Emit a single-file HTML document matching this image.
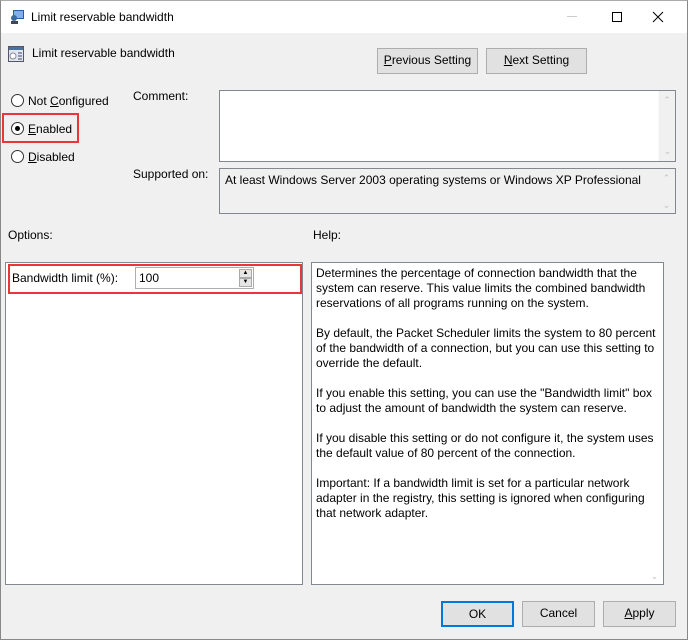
<!DOCTYPE html>
<html><head><style>
*{box-sizing:border-box;margin:0;padding:0}
body{width:688px;height:640px;background:#f0f0f0;font-family:"Liberation Sans",sans-serif;font-size:12px;color:#000;position:relative;overflow:hidden}
.a{position:absolute;white-space:nowrap}
.win{position:absolute;left:0;top:0;width:688px;height:640px;border:1px solid #888;border-top-color:#aaa}
.title{position:absolute;left:1px;top:1px;width:686px;height:32px;background:#fff}
.btn{position:absolute;background:#e1e1e1;border:1px solid #adadad;text-align:center;line-height:23px}
.box{position:absolute;background:#fff;border:1px solid #828790}
.sb{position:absolute;right:0;top:0;bottom:0;width:17px;background:#f0f0f0;color:#c0c0c0;font-size:9px;text-align:center}
.radio{position:absolute;width:13px;height:13px;border:1px solid #333;border-radius:50%;background:#fff}
u{text-decoration:underline}
.help div{margin-bottom:15px}
</style></head><body>
<div class="win"></div>
<div class="title"></div>
<svg class="a" style="left:9px;top:9px" width="16" height="16"><rect x="4" y="1" width="11" height="9" fill="#2a5caa"/><rect x="5" y="2" width="9" height="7" fill="#7fb0e8"/><circle cx="5" cy="9" r="3" fill="#3a6a9a"/><rect x="2" y="12" width="7" height="3" fill="#445"/></svg>
<div class="a" style="left:31px;top:10px">Limit reservable bandwidth</div>
<div class="a" style="left:567px;top:16px;width:10px;height:1px;background:#ccc"></div>
<div class="a" style="left:612px;top:12px;width:10px;height:10px;border:1px solid #000"></div>
<svg class="a" style="left:652px;top:11px" width="12" height="12"><path d="M1 1L11 11M11 1L1 11" stroke="#000" stroke-width="1"/></svg>
<svg class="a" style="left:8px;top:46px" width="16" height="16"><rect x="0.5" y="0.5" width="15" height="15" fill="#dfe6ef" stroke="#556"/><rect x="1" y="1" width="14" height="3" fill="#4a70a8"/><circle cx="5" cy="10" r="3" fill="#fff" stroke="#888"/><path d="M10 7h4M10 10h4M10 13h4" stroke="#445"/></svg>
<div class="a" style="left:32px;top:46px">Limit reservable bandwidth</div>
<div class="btn" style="left:377px;top:48px;width:101px;height:26px"><u>P</u>revious Setting</div>
<div class="btn" style="left:486px;top:48px;width:101px;height:26px"><u>N</u>ext Setting</div>
<div class="radio" style="left:11px;top:94px"></div>
<div class="a" style="left:28px;top:94px">Not <u>C</u>onfigured</div>
<div class="radio" style="left:11px;top:122px"><div style="position:absolute;left:3px;top:3px;width:5px;height:5px;border-radius:50%;background:#000"></div></div>
<div class="a" style="left:28px;top:122px"><u>E</u>nabled</div>
<div class="a" style="left:2px;top:113px;width:77px;height:30px;border:2px solid #e8363c"></div>
<div class="radio" style="left:11px;top:150px"></div>
<div class="a" style="left:28px;top:150px"><u>D</u>isabled</div>
<div class="a" style="left:133px;top:89px">Comment:</div>
<div class="box" style="left:219px;top:90px;width:457px;height:72px"><div class="sb" style="border-left:1px solid #f8f8f8"><div style="margin-top:4px">&#8963;</div><div style="position:absolute;bottom:4px;width:17px">&#8964;</div></div></div>
<div class="a" style="left:133px;top:167px">Supported on:</div>
<div class="box" style="left:219px;top:168px;width:457px;height:46px;background:#f0f0f0"><div class="a" style="left:5px;top:4px">At least Windows Server 2003 operating systems or Windows XP Professional</div><div class="sb"><div style="margin-top:4px">&#8963;</div><div style="position:absolute;bottom:2px;width:17px">&#8964;</div></div></div>
<div class="a" style="left:8px;top:228px">Options:</div>
<div class="a" style="left:313px;top:228px">Help:</div>
<div class="box" style="left:5px;top:262px;width:298px;height:323px"></div>
<div class="a" style="left:8px;top:264px;width:294px;height:30px;border:2px solid #e8363c"></div>
<div class="a" style="left:12px;top:271px">Bandwidth limit (%):</div>
<div class="box" style="left:135px;top:267px;width:119px;height:22px;border-color:#adadad"><div class="a" style="left:3px;top:3px">100</div><div class="a" style="left:103px;top:1px;width:13px;height:9px;background:#e5e5e5;border:1px solid #aaa;font-size:6px;line-height:7px;text-align:center">▲</div><div class="a" style="left:103px;top:10px;width:13px;height:9px;background:#e5e5e5;border:1px solid #aaa;font-size:6px;line-height:7px;text-align:center">▼</div></div>
<div class="box" style="left:311px;top:262px;width:353px;height:323px"><div class="sb" style="background:#fff"><div style="position:absolute;bottom:2px;width:17px">&#8964;</div></div>
<div class="a help" style="left:4px;top:3px;line-height:15px;white-space:normal;width:345px">
<div>Determines the percentage of connection bandwidth that the system can reserve. This value limits the combined bandwidth reservations of all programs running on the system.</div>
<div>By default, the Packet Scheduler limits the system to 80 percent of the bandwidth of a connection, but you can use this setting to override the default.</div>
<div>If you enable this setting, you can use the "Bandwidth limit" box to adjust the amount of bandwidth the system can reserve.</div>
<div>If you disable this setting or do not configure it, the system uses the default value of 80 percent of the connection.</div>
<div>Important: If a bandwidth limit is set for a particular network adapter in the registry, this setting is ignored when configuring that network adapter.</div>
</div></div>
<div class="btn" style="left:441px;top:601px;width:73px;height:26px;border:2px solid #0078d7;line-height:22px">OK</div>
<div class="btn" style="left:522px;top:601px;width:73px;height:26px">Cancel</div>
<div class="btn" style="left:603px;top:601px;width:73px;height:26px"><u>A</u>pply</div>
</body></html>
